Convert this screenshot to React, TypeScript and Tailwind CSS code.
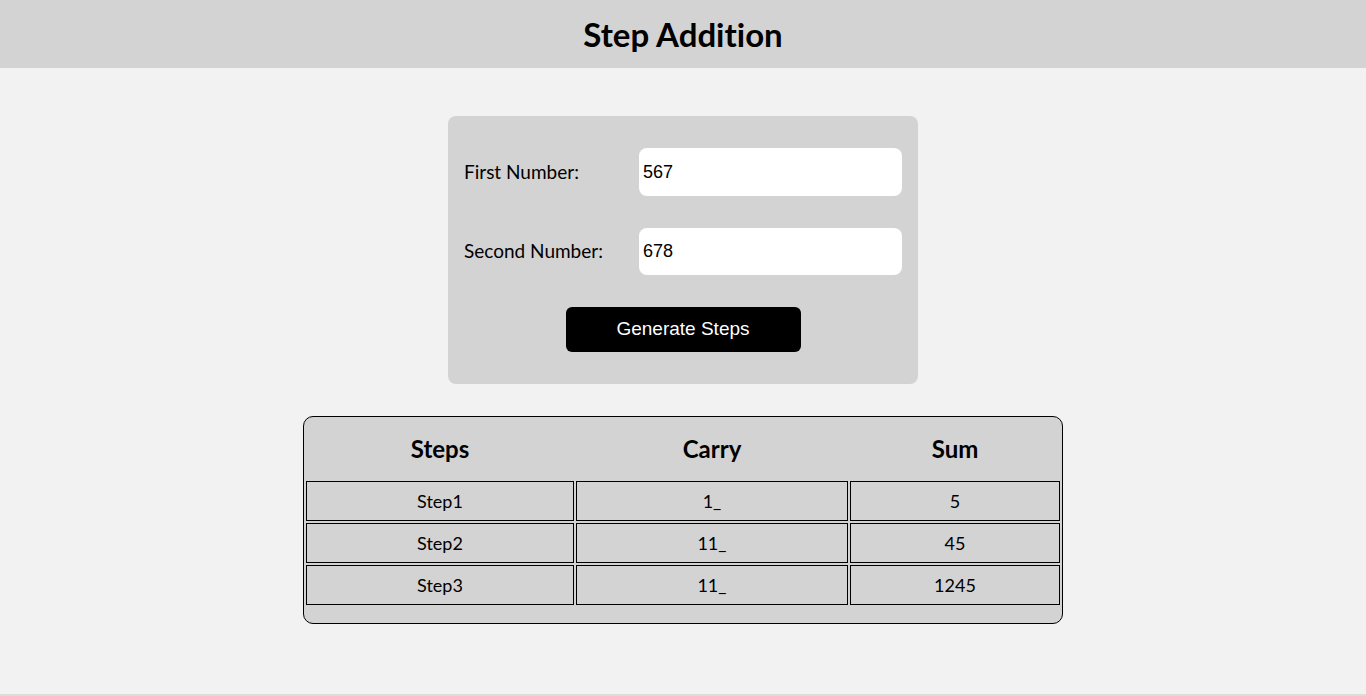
const rows = [
  { step: "Step1", carry: "1_", sum: "5" },
  { step: "Step2", carry: "11_", sum: "45" },
  { step: "Step3", carry: "11_", sum: "1245" },
];

export default function App() {
  return (
    <div className="min-h-screen bg-[#f2f2f2] font-['Lato',sans-serif] text-black [font-variant-ligatures:none]">
      <header className="flex h-[68px] items-center justify-center bg-[#d3d3d3]">
        <h1 className="text-[33px] font-bold leading-none">Step Addition</h1>
      </header>

      <main className="flex flex-col items-center">
        <div className="mt-12 flex w-[470px] flex-col gap-8 rounded-lg bg-[#d3d3d3] px-4 py-8">
          <div className="flex items-center">
            <label className="w-[175px] text-[19px]">First Number:</label>
            <input
              defaultValue="567"
              className="h-12 flex-1 rounded-lg bg-white px-1 font-['Liberation_Sans',sans-serif] text-[18px] outline-none"
            />
          </div>
          <div className="flex items-center">
            <label className="w-[175px] text-[19px]">Second Number:</label>
            <input
              defaultValue="678"
              className="h-[47px] flex-1 rounded-lg bg-white px-1 font-['Liberation_Sans',sans-serif] text-[18px] outline-none"
            />
          </div>
          <div className="flex justify-center">
            <button className="h-[45px] w-[235px] rounded-md bg-black font-['Liberation_Sans',sans-serif] text-[19px] text-white">
              Generate Steps
            </button>
          </div>
        </div>

        <div className="mt-8 w-[760px] rounded-[10px] border border-black bg-[#d3d3d3] pb-4">
          <table className="w-full border-separate border-spacing-[2px]">
            <thead>
              <tr>
                <th className="h-[60px] w-[268px] text-[24px] font-bold">Steps</th>
                <th className="h-[60px] w-[272px] text-[24px] font-bold">Carry</th>
                <th className="h-[60px] text-[24px] font-bold">Sum</th>
              </tr>
            </thead>
            <tbody>
              {rows.map((r) => (
                <tr key={r.step}>
                  <td className="h-10 border border-black text-center text-[18px]">{r.step}</td>
                  <td className="h-10 border border-black text-center text-[18px]">{r.carry}</td>
                  <td className="h-10 border border-black text-center text-[18px]">{r.sum}</td>
                </tr>
              ))}
            </tbody>
          </table>
        </div>

        <div className="mt-[70px] h-[2px] w-full bg-[#dcdcdc]" />
      </main>
    </div>
  );
}
